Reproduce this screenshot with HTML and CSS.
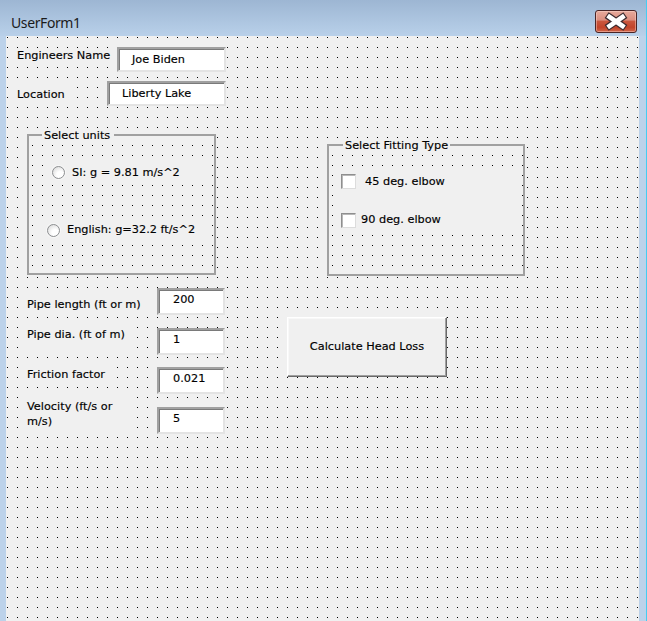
FILE: index.html
```html
<!DOCTYPE html>
<html>
<head>
<meta charset="utf-8">
<title>UserForm1</title>
<link rel="stylesheet" href="styles.css">
</head>
<body>
<div class="window">
  <div class="titlebar">
    <span class="title">UserForm1</span>
    <div class="close">
      <svg width="40" height="21" viewBox="0 0 40 21">
        <path d="M13.5 6 L26.5 15 M26.5 6 L13.5 15" stroke="#3b2a2e" stroke-width="7" stroke-linecap="square" fill="none"/>
        <path d="M13.5 6 L26.5 15 M26.5 6 L13.5 15" stroke="#ffffff" stroke-width="4.6" stroke-linecap="square" fill="none"/>
      </svg>
    </div>
  </div>
  <div class="client">
    <div class="field-row row-name">
      <div class="lbl lbl-name">Engineers Name</div>
      <div class="tb tb-top tb-name">Joe Biden</div>
    </div>
    <div class="field-row row-loc">
      <div class="lbl lbl-loc">Location</div>
      <div class="tb tb-top tb-loc">Liberty Lake</div>
    </div>
    <div class="frames">
      <div class="frame frame-units">
        <div class="caption">Select units</div>
        <div class="opt opt-si"><span class="radio"></span><span class="opt-text">SI: g = 9.81 m/s^2</span></div>
        <div class="opt opt-en"><span class="radio"></span><span class="opt-text">English: g=32.2 ft/s^2</span></div>
      </div>
      <div class="frame frame-fit">
        <div class="caption">Select Fitting Type</div>
        <div class="chk chk-45"><span class="box"></span><span class="chk-text">45 deg. elbow</span></div>
        <div class="chk chk-90"><span class="box"></span><span class="chk-text">90 deg. elbow</span></div>
      </div>
    </div>
    <div class="lower">
      <div class="labels">
        <div class="lbl plbl plbl-1">Pipe length (ft or m)</div>
        <div class="lbl plbl plbl-2">Pipe dia. (ft of m)</div>
        <div class="lbl plbl plbl-3">Friction factor</div>
        <div class="lbl plbl plbl-4">Velocity (ft/s or<br>m/s)</div>
      </div>
      <div class="inputs">
        <div class="tb tb-low tb-1">200</div>
        <div class="tb tb-low tb-2">1</div>
        <div class="tb tb-low tb-3">0.021</div>
        <div class="tb tb-low tb-4">5</div>
      </div>
      <div class="btn">Calculate Head Loss</div>
    </div>
  </div>
</div>
</body>
</html>
```

FILE: styles.css
```css
html, body {
  margin: 0;
  padding: 0;
}

body {
  width: 647px;
  height: 621px;
  overflow: hidden;
  font-family: "DejaVu Sans", "Liberation Sans", sans-serif;
  font-size: 11.3px;
  color: #000;
}

.window {
  width: 647px;
  height: 621px;
  box-sizing: border-box;
  display: flex;
  flex-direction: column;
  background: #bcd2ea;
  border-right: 1px solid #45cdf2;
}

.titlebar {
  height: 36px;
  flex: none;
  display: flex;
  align-items: flex-start;
  background: linear-gradient(#9db6d3, #b3cbe5 80%, #b9d0e9);
}

.title {
  margin: 13px 0 0 11px;
  font-family: "Noto Sans", "Open Sans", sans-serif;
  font-size: 14px;
  line-height: 20px;
  letter-spacing: -0.4px;
  color: #1b1b1b;
}

.close {
  margin: 10px 9px 0 auto;
  width: 42px;
  height: 23px;
  box-sizing: border-box;
  border: 1px solid #4a2526;
  border-radius: 3px;
  background: linear-gradient(#e7aa9c 0%, #dc8f80 42%, #c9553c 50%, #c2442a 78%, #d2664a 100%);
  box-shadow: inset 0 0 0 1px rgba(255, 220, 210, 0.45);
  display: flex;
}

.close svg {
  display: block;
}

.client {
  flex: 1;
  margin: 0 7px 0 6px;
  background-color: #f0f0f0;
  background-image: conic-gradient(at 1px 1px, transparent 75%, #000 0);
  background-size: 10px 10px;
  background-position: 1px 1px;
  -webkit-text-stroke: 0.15px #000;
}

/* Labels and text boxes */
.lbl {
  box-sizing: border-box;
  background: #f0f0f0;
  line-height: 14px;
  white-space: nowrap;
}

.tb {
  box-sizing: border-box;
  background: #fff;
  border: 2px solid;
  border-color: #a0a0a0 #e3e3e3 #e3e3e3 #a0a0a0;
  box-shadow: inset 1px 1px 0 #7a7a7a;
  white-space: nowrap;
}

.field-row {
  display: flex;
  align-items: flex-start;
  height: 25px;
}

.row-name {
  margin-top: 11px;
}

.row-loc {
  margin-top: 9px;
}

.lbl-name {
  margin: 2px 0 0 7px;
  width: 99px;
  height: 18px;
  padding-left: 4px;
}

.lbl-loc {
  margin: 5px 0 0 7px;
  width: 57px;
  height: 18px;
  padding: 2px 0 0 4px;
}

.tb-top {
  height: 25px;
  line-height: 21px;
  padding-left: 13px;
}

.tb-name {
  margin-left: 5px;
  width: 109px;
}

.tb-loc {
  margin-left: 37px;
  width: 119px;
}

/* Frames */
.frames {
  display: flex;
  align-items: flex-start;
  margin-top: 28px;
}

.frame {
  box-sizing: border-box;
  border: 2px solid #a0a0a0;
  background-color: #f0f0f0;
  background-image: conic-gradient(at 1px 1px, transparent 75%, #000 0);
  background-size: 10px 10px;
  background-position: 3px 9px;
}

.frame-units {
  margin-left: 21px;
  width: 189px;
  height: 141px;
}

.frame-fit {
  margin: 10px 0 0 111px;
  width: 198px;
  height: 132px;
}

.caption {
  width: fit-content;
  margin: -7px 0 0 13px;
  padding: 0 4px 0 2px;
  background: #f0f0f0;
  line-height: 14px;
  white-space: nowrap;
}

.frame-fit .caption {
  margin-left: 14px;
  padding-right: 2px;
}

.opt,
.chk {
  display: flex;
  align-items: center;
  background: #f0f0f0;
  white-space: nowrap;
  line-height: 14px;
}

.opt-si {
  margin: 17px 0 0 16px;
  width: 165px;
  height: 25px;
}

.opt-en {
  margin: 32px 0 0 11px;
  width: 170px;
  height: 26px;
}

.radio {
  flex: none;
  margin-left: 7px;
  width: 13px;
  height: 13px;
  box-sizing: border-box;
  border-radius: 50%;
  border: 1px solid #8d8f91;
  background: radial-gradient(circle at 65% 70%, #ffffff 30%, #e6e6e6 70%, #cfcfcf 100%);
  box-shadow: 0 0 0 1px #f7f7f7;
}

.opt-text {
  margin-left: 7px;
}

.chk-45 {
  margin: 14px 0 0 5px;
  width: 184px;
  height: 29px;
}

.chk-90 {
  margin: 9px 0 0 5px;
  width: 184px;
  height: 30px;
}

.box {
  flex: none;
  margin-left: 7px;
  width: 15px;
  height: 15px;
  box-sizing: border-box;
  background: #fff;
  border: 1px solid;
  border-color: #8e8e8e #dcdcdc #dcdcdc #8e8e8e;
  box-shadow: inset 1px 1px 0 #b8b8b8;
}

.chk-45 .chk-text {
  margin-left: 9px;
}

.chk-90 .chk-text {
  margin-left: 5px;
}

/* Lower section */
.lower {
  display: flex;
  align-items: flex-start;
}

.labels {
  margin-left: 15px;
  width: 136px;
  display: flex;
  flex-direction: column;
  align-items: flex-start;
}

.plbl {
  padding-left: 6px;
}

.plbl-1 {
  margin-top: 13px;
  width: 129px;
  height: 27px;
  padding-top: 9px;
}

.plbl-2 {
  margin-top: 8px;
  width: 113px;
  height: 30px;
  padding-top: 4px;
}

.plbl-3 {
  margin-top: 8px;
  width: 92px;
  height: 22px;
  padding-top: 6px;
}

.plbl-4 {
  margin-top: 8px;
  width: 111px;
  height: 42px;
  padding-top: 7px;
  line-height: 15px;
}

.inputs {
  width: 68px;
  display: flex;
  flex-direction: column;
}

.tb-low {
  height: 27px;
  line-height: 14px;
  padding: 3px 0 0 14px;
}

.tb-1 {
  margin-top: 12px;
}

.tb-2 {
  margin-top: 13px;
}

.tb-3 {
  margin-top: 12px;
}

.tb-4 {
  margin-top: 13px;
}

.btn {
  margin: 41px 0 0 62px;
  width: 160px;
  height: 60px;
  box-sizing: border-box;
  display: flex;
  align-items: center;
  justify-content: center;
  background: #f0f0f0;
  border: 1px solid;
  border-color: #ffffff #696969 #696969 #ffffff;
  box-shadow: inset -1px -1px 0 #a0a0a0, inset 1px 1px 0 #f8f8f8;
  line-height: 14px;
  white-space: nowrap;
}
```
